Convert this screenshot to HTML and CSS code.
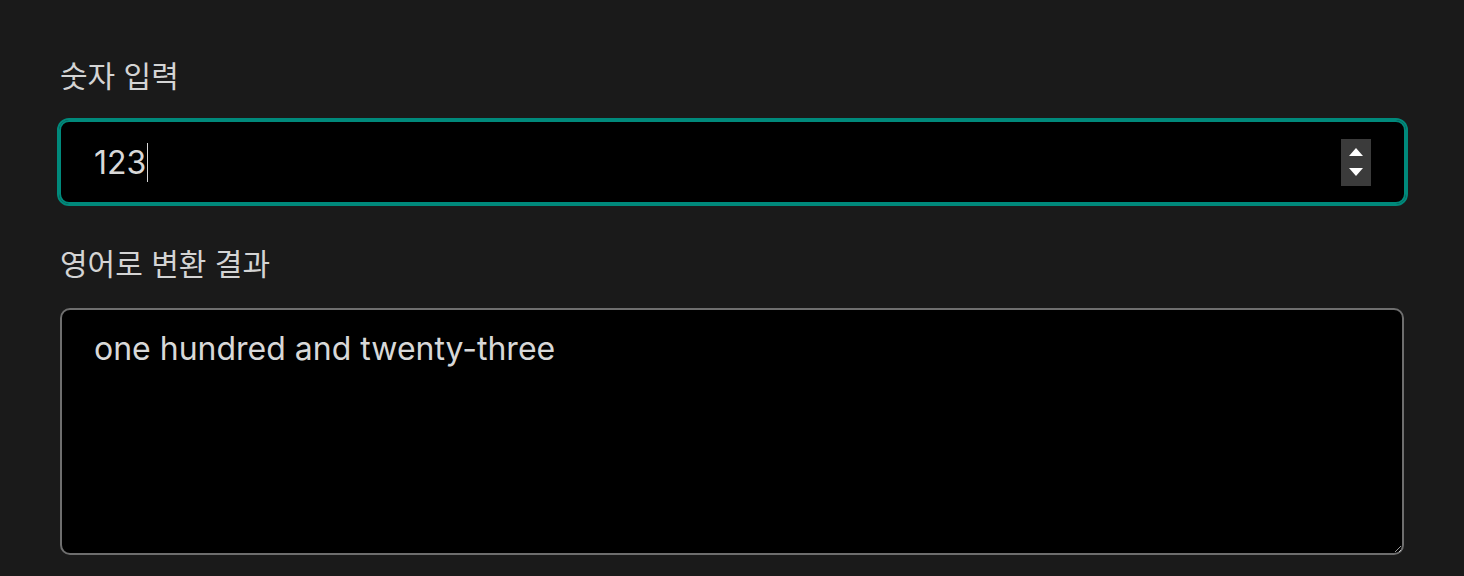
FILE: index.html
```html
<!DOCTYPE html>
<html lang="ko">
  <head>
    <meta charset="UTF-8" />
    <meta name="viewport" content="width=device-width, initial-scale=1.0" />
    <title>숫자를 영어로</title>
    <link rel="stylesheet" href="styles.css">
  </head>
  <body>
    <div class="converter">
      <label class="field-label" for="number">숫자 입력</label>
      <div class="number-field">
        <span class="number-value" id="number">123</span><span class="caret"></span>
        <div class="spinner">
          <svg width="14" height="8" viewBox="0 0 14 8"><path d="M0 8 L7 0 L14 8 Z" fill="#fff"/></svg>
          <svg width="14" height="8" viewBox="0 0 14 8"><path d="M0 0 L14 0 L7 8 Z" fill="#fff"/></svg>
        </div>
      </div>

      <label class="field-label" for="result">영어로 변환 결과</label>
      <textarea id="result" class="result" readonly>one hundred and twenty-three</textarea>
    </div>
  </body>
</html>
```

FILE: styles.css
```css
html {
  color-scheme: dark;
}

body {
  margin: 0;
  background-color: #1a1a1a;
  font-family: Inter, "Noto Sans CJK KR", sans-serif;
}

.converter {
  display: flex;
  flex-direction: column;
  padding: 54px 0 0 60px;
  width: 1344px;
}

.field-label {
  font-family: "Noto Sans CJK KR", sans-serif;
  font-size: 30px;
  line-height: 40px;
  color: #d4d4d4;
  margin-bottom: 26px;
}

.number-field {
  display: flex;
  align-items: center;
  box-sizing: border-box;
  height: 84px;
  margin-left: -1px;
  width: 1347px;
  padding: 0 33px 0 33px;
  background-color: #000;
  border: 2px solid #00897b;
  outline: 2px solid #00897b;
  border-radius: 10px;
  margin-bottom: 38px;
}

.number-value {
  font-size: 32px;
  color: #d8d8d8;
}

.caret {
  width: 1px;
  height: 39px;
  background-color: #d8d8d8;
  margin-left: 1px;
}

.spinner {
  margin-left: auto;
  width: 30px;
  height: 47px;
  background-color: #3b3b3b;
  display: flex;
  flex-direction: column;
  align-items: center;
  justify-content: space-around;
  padding: 4px 0;
  box-sizing: border-box;
}

.result {
  box-sizing: border-box;
  width: 1344px;
  height: 247px;
  padding: 17px 32px;
  background-color: #000;
  border: 2px solid #6e6e6e;
  border-radius: 10px;
  color: #d8d8d8;
  font-family: Inter, sans-serif;
  font-size: 32px;
  line-height: 44px;
  outline: none;
  resize: vertical;
}
```
